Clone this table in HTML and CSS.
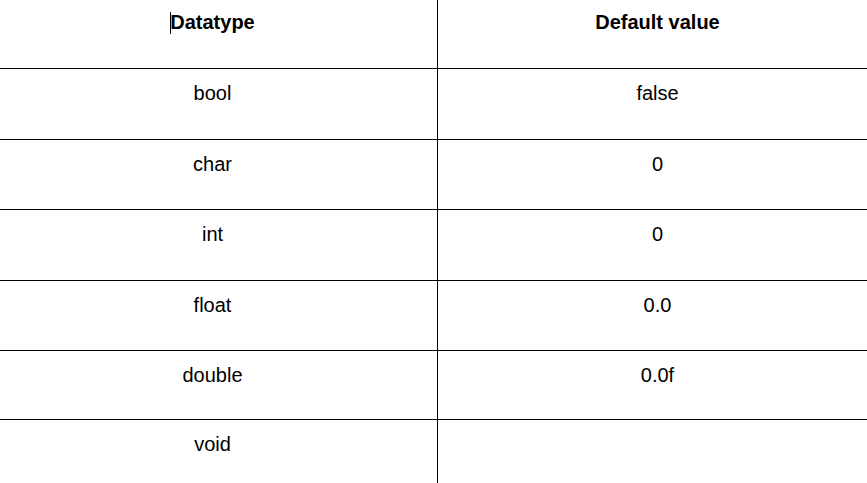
FILE: index.html
```html
<!DOCTYPE html>
<html>
<head>
<meta charset="utf-8">
<link rel="stylesheet" href="styles.css">
</head>
<body>
<div class="table">
  <div class="row head">
    <div class="cell left"><span class="caret"></span>Datatype</div>
    <div class="cell right">Default value</div>
  </div>
  <div class="row tall">
    <div class="cell left">bool</div>
    <div class="cell right">false</div>
  </div>
  <div class="row">
    <div class="cell left">char</div>
    <div class="cell right">0</div>
  </div>
  <div class="row tall">
    <div class="cell left">int</div>
    <div class="cell right">0</div>
  </div>
  <div class="row">
    <div class="cell left">float</div>
    <div class="cell right">0.0</div>
  </div>
  <div class="row short">
    <div class="cell left">double</div>
    <div class="cell right">0.0f</div>
  </div>
  <div class="row last">
    <div class="cell left">void</div>
    <div class="cell right"></div>
  </div>
</div>
</body>
</html>
```
FILE: styles.css
```css
html, body {
  margin: 0;
  padding: 0;
  background: #fff;
  overflow: hidden;
  height: 483px;
}
body {
  font-family: "Liberation Sans", Arial, sans-serif;
  font-size: 20px;
  color: #000;
}
.table {
  display: flex;
  flex-direction: column;
  width: 867px;
  height: 483px;
}
.row {
  display: grid;
  grid-template-columns: 438px 1fr;
  height: 70px;
  box-sizing: border-box;
  border-bottom: 1px solid #000;
  flex: none;
}
.row.head {
  height: 69px;
}
.row.tall {
  height: 71px;
}
.row.short {
  height: 69px;
}
.row.last {
  border-bottom: none;
  flex: 1 1 auto;
}
.cell {
  text-align: center;
  padding-top: 13px;
  line-height: 23px;
  white-space: nowrap;
}
.head .cell {
  padding-top: 11px;
  font-weight: bold;
}
.left {
  border-right: 1px solid #000;
  padding-right: 12px;
}
.right {
  padding-left: 10px;
}
.caret {
  display: inline-block;
  width: 1px;
  height: 22px;
  background: #000;
  vertical-align: -5px;
  margin-right: -1px;
}
```
